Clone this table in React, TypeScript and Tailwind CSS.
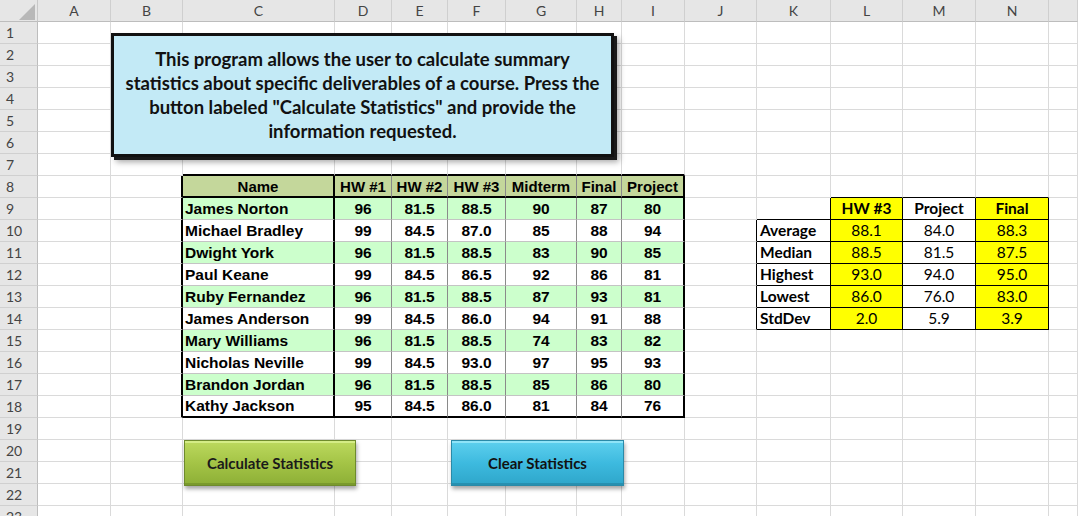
import React from "react";

const COLS = ["", "A", "B", "C", "D", "E", "F", "G", "H", "I", "J", "K", "L", "M", "N", ""];
const ROWS = Array.from({ length: 23 }, (_, i) => i + 1);

const GRID = "border-r border-b border-r-[#dadada] border-b-[#dadada]";

const students: [string, string, string, string, string, string, string][] = [
  ["James Norton", "96", "81.5", "88.5", "90", "87", "80"],
  ["Michael Bradley", "99", "84.5", "87.0", "85", "88", "94"],
  ["Dwight York", "96", "81.5", "88.5", "83", "90", "85"],
  ["Paul Keane", "99", "84.5", "86.5", "92", "86", "81"],
  ["Ruby Fernandez", "96", "81.5", "88.5", "87", "93", "81"],
  ["James Anderson", "99", "84.5", "86.0", "94", "91", "88"],
  ["Mary Williams", "96", "81.5", "88.5", "74", "83", "82"],
  ["Nicholas Neville", "99", "84.5", "93.0", "97", "95", "93"],
  ["Brandon Jordan", "96", "81.5", "88.5", "85", "86", "80"],
  ["Kathy Jackson", "95", "84.5", "86.0", "81", "84", "76"],
];

const headers = ["Name", "HW #1", "HW #2", "HW #3", "Midterm", "Final", "Project"];

const stats: [string, string, string, string][] = [
  ["Average", "88.1", "84.0", "88.3"],
  ["Median", "88.5", "81.5", "87.5"],
  ["Highest", "93.0", "94.0", "95.0"],
  ["Lowest", "86.0", "76.0", "83.0"],
  ["StdDev", "2.0", "5.9", "3.9"],
];

type Cell = { text?: string; cls: string };

// columns: 1 = A ... 14 = N, 15 = O
function cellFor(r: number, c: number): Cell {
  // data table C8:I18
  if (r >= 8 && r <= 18 && c >= 3 && c <= 9) {
    const i = c - 3;
    const right = c === 3 || c === 9 ? "border-r-2 border-r-black" : "border-r border-r-[#8a8a8a]";
    const bottom =
      r === 8 || r === 18 ? "border-b-2 border-b-black" : "border-b border-b-[#c4c4c4]";
    const align = c === 3 ? "justify-start pl-[2px]" : "justify-center";
    if (r === 8) {
      return {
        text: headers[i],
        cls: `${right} ${bottom} bg-[#c4d79b] justify-center pt-[2px] font-['Liberation_Sans',Arial,sans-serif] font-bold text-[15px] text-black`,
      };
    }
    const s = r - 9;
    const bg = s % 2 === 0 ? "bg-[#ccffcc]" : "bg-white";
    return {
      text: students[s][i],
      cls: `${right} ${bottom} ${bg} ${align} font-['Liberation_Sans',Arial,sans-serif] font-bold text-[15.5px] text-black`,
    };
  }
  // stats table K9:N14
  if (r >= 9 && r <= 14 && c >= 11 && c <= 14) {
    const bold = r === 9 || c === 11 ? "font-bold" : "font-normal";
    const yellow = c === 12 || c === 14 ? "bg-[#ffff00]" : "bg-white";
    const align = c === 11 ? "justify-start pl-[3px]" : "justify-center";
    if (r === 9 && c === 11) {
      return { cls: "border-r border-b border-r-black border-b-black" };
    }
    const text =
      r === 9 ? ["HW #3", "Project", "Final"][c - 12] : stats[r - 10][c - 11];
    return {
      text,
      cls: `border-r border-b border-r-black border-b-black ${c === 11 ? "bg-white" : yellow} ${align} ${bold} font-['Lato',sans-serif] text-[15.5px] text-black`,
    };
  }
  // borders around the tables
  if (c === 2 && r >= 8 && r <= 18) return { cls: "border-r-2 border-b border-r-black border-b-[#dadada]" };
  if (r === 7 && c >= 3 && c <= 9) return { cls: "border-b-2 border-r border-b-black border-r-[#dadada]" };
  if (c === 10 && r >= 10 && r <= 14) return { cls: "border-r border-b border-r-black border-b-[#dadada]" };
  if (r === 8 && c >= 12 && c <= 14) return { cls: "border-r border-b border-b-black border-r-[#dadada]" };
  return { cls: GRID };
}

function Corner() {
  return (
    <div className="flex items-end justify-end border-r border-b border-r-[#c8c8c8] border-b-[#bdbdbd] bg-[#e6e6e6] pr-[2px] pb-[1px]">
      <svg width="16" height="16" viewBox="0 0 16 16">
        <polygon points="16,0 16,16 0,16" fill="#b8b8b8" />
      </svg>
    </div>
  );
}

export default function App() {
  return (
    <div className="relative h-[516px] w-[1078px] overflow-hidden bg-white">
      <div className="grid grid-cols-[38px_73px_72px_152px_57px_56px_58px_71px_45px_63px_72px_74px_72px_73px_73px_1fr] grid-rows-[22px_repeat(23,22px)]">
        {COLS.map((label, c) =>
          c === 0 ? (
            <Corner key="corner" />
          ) : (
            <div
              key={`h${c}`}
              className="flex items-center justify-center border-r border-b border-r-[#cfcfcf] border-b-[#bdbdbd] bg-[#e6e6e6] font-['Lato',sans-serif] text-[14px] text-[#444]"
            >
              {label}
            </div>
          ),
        )}
        {ROWS.map((r) =>
          COLS.map((_, c) => {
            if (c === 0) {
              return (
                <div
                  key={`r${r}`}
                  className="flex items-center border-r border-b border-r-[#bdbdbd] border-b-[#d0d0d0] bg-[#e6e6e6] pl-[6px] font-['Lato',sans-serif] text-[14px] text-[#444]"
                >
                  {r}
                </div>
              );
            }
            const cell = cellFor(r, c);
            return (
              <div key={`${r}-${c}`} className={`flex items-center overflow-hidden whitespace-nowrap ${cell.cls}`}>
                {cell.text}
              </div>
            );
          }),
        )}
      </div>

      {/* description text box */}
      <div className="absolute left-[111px] top-[33px] flex h-[124px] w-[503px] items-center justify-center border-[3px] border-[#111] bg-[#c3eaf6] shadow-[3px_3px_0_#1a1a1a,5px_5px_6px_rgba(0,0,0,0.35)]">
        <p className="text-center font-['Lato',sans-serif] text-[18.5px] font-bold leading-[24px] text-[#111]">
          This program allows the user to calculate summary
          <br />
          statistics about specific deliverables of a course. Press the
          <br />
          button labeled "Calculate Statistics" and provide the
          <br />
          information requested.
        </p>
      </div>

      {/* macro buttons */}
      <button
        type="button"
        className="absolute left-[184px] top-[440px] flex h-[46px] w-[172px] items-center justify-center border border-[#6e8b2c] bg-gradient-to-b from-[#bcd95e] via-[#a4c446] to-[#8daf36] font-['Lato',sans-serif] text-[15px] font-bold text-[#1a1a1a] shadow-[inset_0_2px_0_#d4ec86,inset_0_-2px_0_#7a9a2c,1px_3px_4px_rgba(0,0,0,0.35)]"
      >
        Calculate Statistics
      </button>
      <button
        type="button"
        className="absolute left-[451px] top-[440px] flex h-[46px] w-[173px] items-center justify-center border border-[#2a8aa8] bg-gradient-to-b from-[#5dd0ee] via-[#3dbadf] to-[#2ea6ca] font-['Lato',sans-serif] text-[15px] font-bold text-[#111] shadow-[inset_0_2px_0_#8fe4f8,inset_0_-2px_0_#2790b0,1px_3px_4px_rgba(0,0,0,0.35)]"
      >
        Clear Statistics
      </button>
    </div>
  );
}
